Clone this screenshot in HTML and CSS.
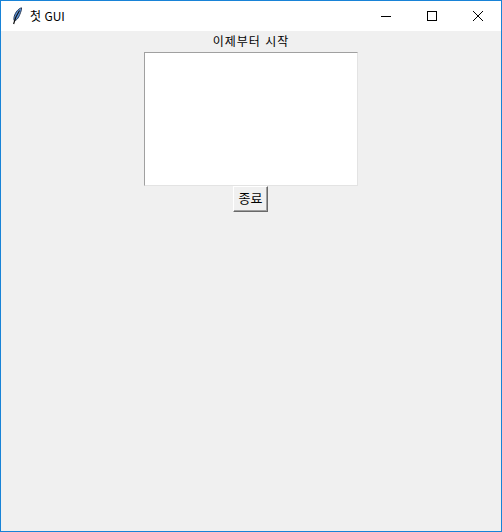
FILE: index.html
```html
<!DOCTYPE html>
<html lang="ko">

<head>
    <meta charset="UTF-8">
    <title>첫 GUI</title>
    <link rel="stylesheet" href="styles.css">
</head>

<body>
    <div class="window">
        <div class="titlebar">
            <svg class="feather" width="12" height="18" viewBox="0 0 12 18">
                <path d="M10.5 0.8C7.5 1.5 4.5 5 3.2 9.5C2.8 11 2.7 12.5 3.2 13.6C5.5 13.6 7.5 11 8.8 7.5C9.8 5 10.8 2.5 10.5 0.8Z" fill="#5b93d8" stroke="#1c2a44" stroke-width="0.9"/>
                <path d="M8.5 3.5C6.5 6.5 4 11 2.6 17" fill="none" stroke="#111" stroke-width="1.2"/>
            </svg>
            <span class="title">첫 GUI</span>
            <div class="controls">
                <div class="control">
                    <svg width="12" height="12" viewBox="0 0 12 12"><path d="M1 6.5H11" stroke="#000" stroke-width="1"/></svg>
                </div>
                <div class="control">
                    <svg width="12" height="12" viewBox="0 0 12 12"><rect x="1.5" y="1.5" width="9" height="9" fill="none" stroke="#000" stroke-width="1"/></svg>
                </div>
                <div class="control">
                    <svg width="12" height="12" viewBox="0 0 12 12"><path d="M1 1L11 11M11 1L1 11" stroke="#000" stroke-width="1"/></svg>
                </div>
            </div>
        </div>
        <div class="content">
            <div class="label">이제부터 시작</div>
            <div class="text-box"></div>
            <button class="quit-button">종료</button>
        </div>
    </div>
</body>

</html>
```
FILE: styles.css
```css
* {
    margin: 0;
    padding: 0;
    box-sizing: border-box;
}

body {
    font-family: "Noto Sans CJK KR", "Liberation Sans", sans-serif;
    font-size: 12px;
    color: #000;
    background-color: #f0f0f0;
}

.window {
    width: 502px;
    height: 532px;
    display: flex;
    flex-direction: column;
    border: 1px solid #1883d7;
    background-color: #f0f0f0;
}

.titlebar {
    height: 30px;
    flex-shrink: 0;
    display: flex;
    align-items: center;
    background-color: #fff;
    padding-left: 10px;
}

.feather {
    flex-shrink: 0;
}

.title {
    margin-left: 7px;
    line-height: 16px;
}

.controls {
    margin-left: auto;
    display: flex;
}

.control {
    width: 46px;
    height: 30px;
    display: flex;
    align-items: center;
    justify-content: center;
}

.content {
    display: flex;
    flex-direction: column;
    align-items: center;
}

.label {
    height: 21px;
    line-height: 19px;
    letter-spacing: 1px;
}

.text-box {
    width: 214px;
    height: 134px;
    background-color: #fff;
    border: 1px solid;
    border-color: #a0a0a0 #e3e3e3 #e3e3e3 #a0a0a0;
}

.quit-button {
    width: 35px;
    height: 26px;
    margin-right: 1px;
    padding-bottom: 3px;
    font-family: inherit;
    font-size: 13px;
    color: #000;
    background-color: #f0f0f0;
    border: 1px solid;
    border-color: #fff #696969 #696969 #fff;
    box-shadow: inset -1px -1px 0 #a0a0a0;
}
```
